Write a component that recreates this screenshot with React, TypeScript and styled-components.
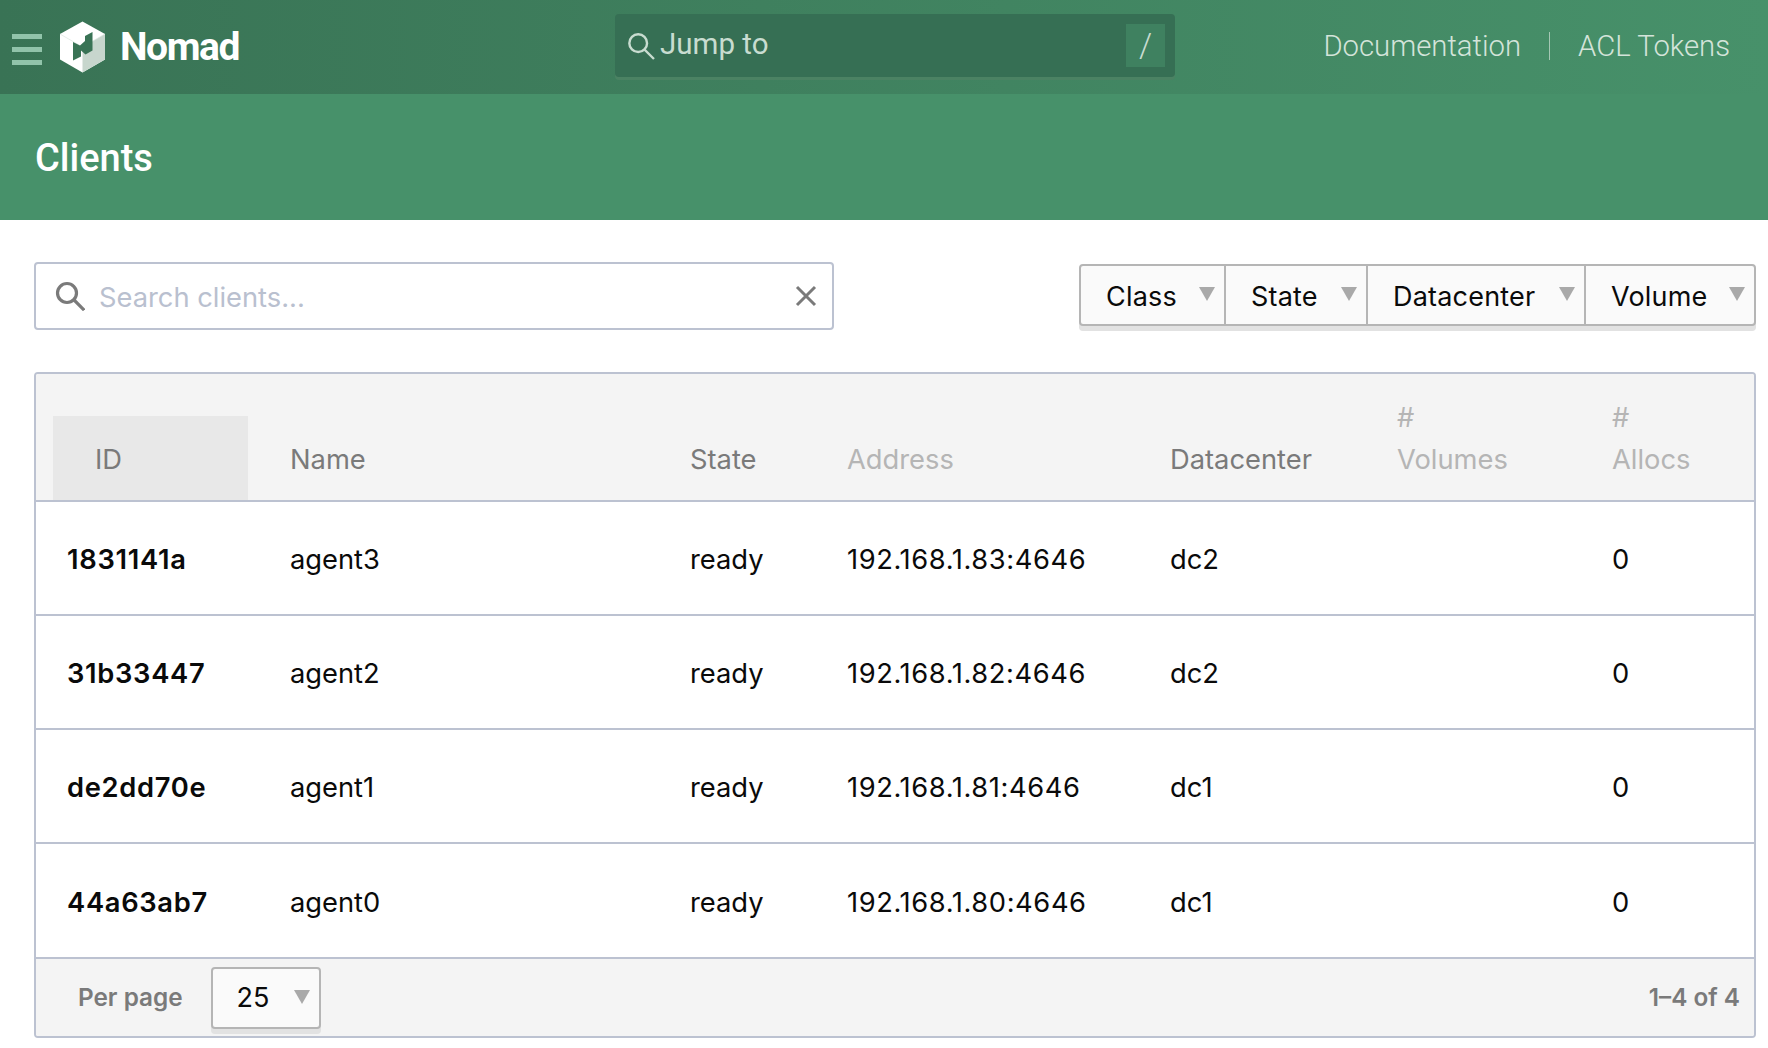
import React from 'react';
import styled, { createGlobalStyle } from 'styled-components';

const GlobalStyle = createGlobalStyle`
  * { box-sizing: border-box; }
  html, body { margin: 0; padding: 0; background: #fff; }
  body { font-family: Inter, "Liberation Sans", sans-serif; color: #0a0a0a; }
`;

const Page = styled.div`
  width: 100%;
  min-height: 100vh;
  background: #fff;
`;

const TopBar = styled.header`
  height: 94px;
  display: flex;
  align-items: center;
  padding: 0 38px 0 12px;
  background: linear-gradient(90deg, #397355 0%, #47916a 100%);
  font-family: Roboto, sans-serif;
`;

const Brand = styled.div`
  flex: 0 0 603px;
  display: flex;
  align-items: center;
`;

const Burger = styled.div`
  width: 30px;
  display: flex;
  flex-direction: column;
  gap: 8px;
  margin-top: 5px;
  margin-right: 18px;

  span {
    display: block;
    height: 5px;
    background: #91c3aa;
  }
`;

const Wordmark = styled.div`
  margin-left: 15px;
  color: #fff;
  font-size: 39px;
  font-weight: 700;
  letter-spacing: -1.4px;
  line-height: 1;
`;

const JumpBox = styled.div`
  width: 560px;
  height: 63px;
  margin-top: -3px;
  padding: 0 10px 0 12px;
  display: flex;
  align-items: center;
  border-radius: 4px;
  background: #366f54;
  box-shadow: 0 3px 0 #4b8263;
  color: #c8dcd0;
  font-size: 29.5px;

  svg {
    flex: none;
  }
`;

const JumpLabel = styled.span`
  flex: 1;
  margin-left: 5px;
  padding-bottom: 4px;
`;

const SlashKey = styled.span`
  width: 39px;
  height: 43px;
  display: flex;
  align-items: center;
  justify-content: center;
  background: #3f8160;
  font-size: 33px;
  font-weight: 300;
`;

const TopNav = styled.nav`
  margin-left: auto;
  margin-top: -2px;
  display: flex;
  align-items: center;
  color: #d4e4da;
  font-size: 29.3px;
  font-weight: 300;
`;

const NavDivider = styled.span`
  width: 1px;
  height: 28px;
  margin: 0 28px;
  background: #a5c7b4;
`;

const Hero = styled.div`
  height: 126px;
  display: flex;
  align-items: center;
  padding: 2px 0 0 35px;
  background: #47916a;
`;

const HeroTitle = styled.h1`
  margin: 0;
  color: #fff;
  font-family: Roboto, sans-serif;
  font-size: 38px;
  font-weight: 500;
`;

const Content = styled.main`
  padding: 42px 12px 0 34px;
`;

const Toolbar = styled.div`
  display: flex;
  justify-content: space-between;
  align-items: flex-start;
  margin-bottom: 42px;
`;

const SearchBox = styled.div`
  width: 800px;
  height: 68px;
  display: flex;
  align-items: center;
  padding: 0 14px 0 19px;
  border: 2px solid #bcc2d1;
  border-radius: 4px;
  background: #fff;
`;

const SearchText = styled.span`
  flex: 1;
  margin-left: 14px;
  padding-top: 2px;
  color: #b9c0cf;
  font-size: 27.3px;
`;

const FilterGroup = styled.div`
  display: flex;
  margin-top: 2px;
  height: 62px;
  border: 2px solid #b5b5b5;
  border-radius: 4px;
  background: #fafafa;
  box-shadow: 0 5px 0 #e2e2e2;
`;

const Dropdown = styled.div<{ $width: number }>`
  position: relative;
  width: ${(p) => p.$width}px;
  padding: 2px 0 0 25px;
  display: flex;
  align-items: center;
  font-size: 27px;
  letter-spacing: 0.2px;
  color: #0a0a0a;

  & + & {
    border-left: 2px solid #b5b5b5;
  }
`;

const Caret = styled.span`
  position: absolute;
  top: 21px;
  right: 9px;
  width: 0;
  height: 0;
  border-left: 8px solid transparent;
  border-right: 8px solid transparent;
  border-top: 14px solid #a9a9a9;
`;

const TableWrap = styled.section`
  border: 2px solid #bcc2d1;
  border-radius: 4px;
  overflow: hidden;
  background: #fff;
`;

const Table = styled.table`
  width: 100%;
  table-layout: fixed;
  border-collapse: collapse;
  font-size: 27.3px;
`;

const HeadRow = styled.tr`
  height: 127px;
  background: #f4f4f4;
`;

const Th = styled.th<{ $muted?: boolean }>`
  padding: 0 0 19px 42px;
  vertical-align: bottom;
  text-align: left;
  font-weight: 400;
  line-height: 42px;
  color: ${(p) => (p.$muted ? '#b5b5b5' : '#7a7a7a')};
`;

const SortedTh = styled.th`
  padding: 0;
  vertical-align: bottom;
  text-align: left;
  font-weight: 400;
  color: #7a7a7a;
`;

const SortedLabel = styled.div`
  margin-left: 17px;
  height: 84px;
  padding: 23px 0 0 42px;
  line-height: 42px;
  background: #e8e8e8;
`;

const Row = styled.tr`
  height: 114px;
  border-top: 2px solid #bcc2d1;
`;

const Td = styled.td`
  padding: 3px 0 0 42px;
`;

const AddressCell = styled(Td)`
  letter-spacing: 0.6px;
`;

const IdCell = styled.td`
  padding: 3px 0 0 31px;
  font-weight: 600;
  letter-spacing: 0.7px;
`;

const Footer = styled.footer`
  height: 79px;
  display: flex;
  align-items: center;
  padding: 0 14px 0 42px;
  border-top: 2px solid #bcc2d1;
  background: #f4f4f4;
  color: #7a7a7a;
  font-size: 24.3px;
  font-weight: 600;
`;

const FooterLabel = styled.span`
  padding-bottom: 2px;
`;

const PerPage = styled.div`
  position: relative;
  width: 110px;
  height: 62px;
  margin-left: 28px;
  padding-left: 24px;
  display: flex;
  align-items: center;
  border: 2px solid #b5b5b5;
  border-radius: 4px;
  background: #fafafa;
  box-shadow: 0 5px 0 #e2e2e2;
  color: #0a0a0a;
  font-size: 27px;
  font-weight: 400;
`;

const Range = styled(FooterLabel)`
  margin-left: auto;
`;

const clients = [
  { id: '1831141a', name: 'agent3', address: '192.168.1.83:4646', dc: 'dc2' },
  { id: '31b33447', name: 'agent2', address: '192.168.1.82:4646', dc: 'dc2' },
  { id: 'de2dd70e', name: 'agent1', address: '192.168.1.81:4646', dc: 'dc1' },
  { id: '44a63ab7', name: 'agent0', address: '192.168.1.80:4646', dc: 'dc1' },
];

const filters = [
  { label: 'Class', width: 143 },
  { label: 'State', width: 142 },
  { label: 'Datacenter', width: 218 },
  { label: 'Volume', width: 170 },
];

const columnWidths = [212, 400, 157, 323, 227, 215, 185];

function Logo() {
  return (
    <svg width="45" height="52" viewBox="0 0 45 52" aria-hidden="true">
      <polygon points="22.5,0.5 45,13 45,38.5 22.5,51.5 0,38.5 0,13" fill="#ffffff" />
      <polygon points="22.5,26 45,13 45,38.5 22.5,51.5" fill="#c7d6cd" />
      <path d="M0 13 L22.5 26 L45 13" fill="none" stroke="#dbe5df" strokeWidth="0.7" />
      <polygon
        points="13,21 20,24.5 25,20 25,15 32.5,11 32.5,29.5 25.5,33.5 21,29.5 21,35.5 13,39.5"
        fill="#397355"
      />
    </svg>
  );
}

// the handle runs longer than the feather/lucide glass, so it's drawn here
function Magnifier({ size, color, width }: { size: number; color: string; width: number }) {
  return (
    <svg width={size} height={size} viewBox="0 0 30 30" fill="none" aria-hidden="true">
      <circle cx="12" cy="12" r="9.5" stroke={color} strokeWidth={width} />
      <path d="M19 19 L28 28" stroke={color} strokeWidth={width} strokeLinecap="square" />
    </svg>
  );
}

function CloseIcon() {
  return (
    <svg width="24" height="24" viewBox="0 0 24 24" fill="none" aria-hidden="true">
      <path d="M3 3 L21 21 M21 3 L3 21" stroke="#7a7a7a" strokeWidth="3" />
    </svg>
  );
}

export default function App() {
  return (
    <Page>
      <GlobalStyle />
      <TopBar>
        <Brand>
          <Burger>
            <span />
            <span />
            <span />
          </Burger>
          <Logo />
          <Wordmark>Nomad</Wordmark>
        </Brand>
        <JumpBox>
          <Magnifier size={28} color="#c8dcd0" width={2.6} />
          <JumpLabel>Jump to</JumpLabel>
          <SlashKey>/</SlashKey>
        </JumpBox>
        <TopNav>
          <span>Documentation</span>
          <NavDivider />
          <span>ACL Tokens</span>
        </TopNav>
      </TopBar>
      <Hero>
        <HeroTitle>Clients</HeroTitle>
      </Hero>
      <Content>
        <Toolbar>
          <SearchBox>
            <Magnifier size={30} color="#7a7a7a" width={3.2} />
            <SearchText>Search clients...</SearchText>
            <CloseIcon />
          </SearchBox>
          <FilterGroup>
            {filters.map((f) => (
              <Dropdown key={f.label} $width={f.width}>
                {f.label}
                <Caret />
              </Dropdown>
            ))}
          </FilterGroup>
        </Toolbar>
        <TableWrap>
          <Table>
            <colgroup>
              {columnWidths.map((w, i) => (
                <col key={i} style={{ width: w }} />
              ))}
            </colgroup>
            <thead>
              <HeadRow>
                <SortedTh>
                  <SortedLabel>ID</SortedLabel>
                </SortedTh>
                <Th>Name</Th>
                <Th>State</Th>
                <Th $muted>Address</Th>
                <Th>Datacenter</Th>
                <Th $muted>
                  #
                  <br />
                  Volumes
                </Th>
                <Th $muted>
                  #
                  <br />
                  Allocs
                </Th>
              </HeadRow>
            </thead>
            <tbody>
              {clients.map((c) => (
                <Row key={c.id}>
                  <IdCell>{c.id}</IdCell>
                  <Td>{c.name}</Td>
                  <Td>ready</Td>
                  <AddressCell>{c.address}</AddressCell>
                  <Td>{c.dc}</Td>
                  <Td />
                  <Td>0</Td>
                </Row>
              ))}
            </tbody>
          </Table>
          <Footer>
            <FooterLabel>Per page</FooterLabel>
            <PerPage>
              25
              <Caret />
            </PerPage>
            <Range>1–4 of 4</Range>
          </Footer>
        </TableWrap>
      </Content>
    </Page>
  );
}
